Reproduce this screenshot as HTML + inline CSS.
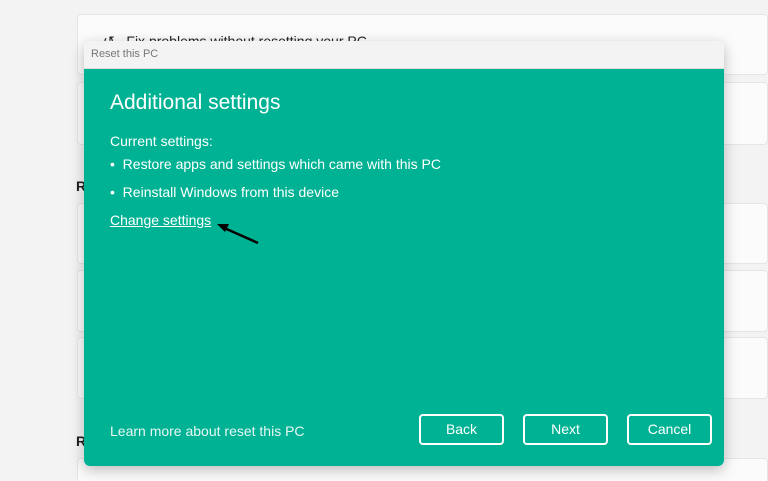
<!DOCTYPE html><html><head><style>
html,body{margin:0;width:768px;height:481px;overflow:hidden}
body{background:#f3f3f3;font-family:"Liberation Sans",sans-serif;position:relative}
.card{position:absolute;left:77px;right:0;background:#fbfbfb;border:1px solid #e5e5e5;border-radius:4px}
.h{position:absolute;left:76px;font-weight:bold;font-size:14px;color:#222}
.dlg{position:absolute;left:84px;top:41px;width:640px;height:425px;border-radius:6px;overflow:hidden;box-shadow:0 4px 14px rgba(0,0,0,.25)}
.tb{height:27px;background:#f3f3f3;font-size:11px;color:#777;line-height:27px;padding-left:7px;border-bottom:1px solid #ddd}
.g{position:absolute;top:28px;left:0;right:0;bottom:0;background:#00b294;color:#fff}
.btn{position:absolute;top:345px;width:81px;height:27px;border:2px solid #fff;border-radius:4px;text-align:center;line-height:27px;font-size:14px}
</style></head><body>
<div class="card" style="top:14px;height:59px"></div>
<div style="position:absolute;left:103px;top:33px;font-size:14px;color:#222">↺ &nbsp;&nbsp;Fix problems without resetting your PC</div>
<div class="card" style="top:82px;height:61px"></div>
<div class="h" style="top:178px">R</div>
<div class="card" style="top:203px;height:59px"></div>
<div class="card" style="top:270px;height:60px"></div>
<div class="card" style="top:337px;height:60px"></div>
<div class="h" style="top:433px">R</div>
<div class="card" style="top:458px;height:40px"></div>
<div class="dlg"><div class="tb">Reset this PC</div>
<div class="g">
<div style="position:absolute;left:26px;top:22px;font-size:21px">Additional settings</div>
<div style="position:absolute;left:26px;top:64px;font-size:14px">Current settings:</div>
<div style="position:absolute;left:26px;top:87px;font-size:14px">•&nbsp; Restore apps and settings which came with this PC</div>
<div style="position:absolute;left:26px;top:115px;font-size:14px">•&nbsp; Reinstall Windows from this device</div>
<div style="position:absolute;left:26px;top:143px;font-size:14px;text-decoration:underline">Change settings</div>
<svg style="position:absolute;left:130px;top:148px" width="50" height="30"><line x1="44" y1="26" x2="8" y2="10" stroke="#000" stroke-width="2.5"/><polygon points="3,7 15,7 11,15" fill="#000"/></svg>
<div style="position:absolute;left:26px;top:354px;font-size:14px;color:#e6f7f3">Learn more about reset this PC</div>
<div class="btn" style="left:335px">Back</div>
<div class="btn" style="left:439px">Next</div>
<div class="btn" style="left:543px">Cancel</div>
</div></div>
</body></html>
